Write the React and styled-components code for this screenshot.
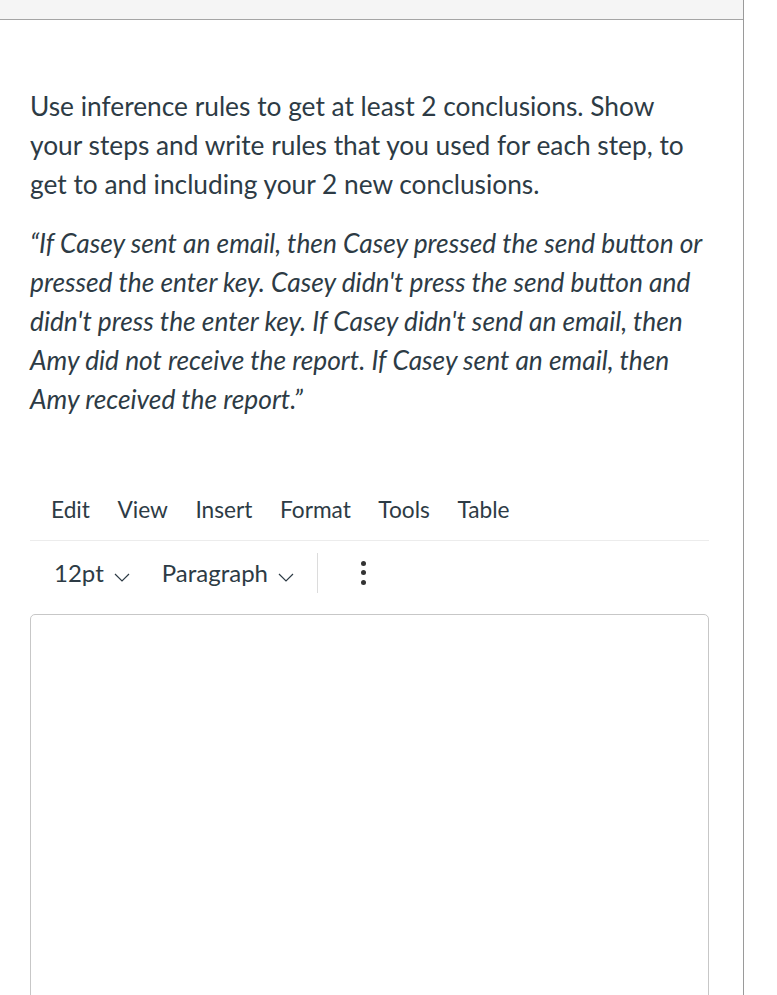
import React from 'react'
import styled, { createGlobalStyle } from 'styled-components'

const GlobalStyle = createGlobalStyle`
  html, body {
    margin: 0;
    padding: 0;
    background: #fff;
  }
  body {
    font-family: Lato, "Liberation Sans", sans-serif;
    color: #2d3b45;
  }
`

const Page = styled.div`
  width: 743px;
  height: 995px;
  border-right: 1px solid #9a9a9a;
  overflow: hidden;
`

const TopStrip = styled.div`
  height: 19px;
  background: #f5f5f5;
  border-bottom: 1px solid #a5a5a5;
`

const Content = styled.div`
  width: 679px;
  padding: 67px 0 0 30px;
`

const Para = styled.p`
  margin: 0 0 20px;
  font-size: 26.3px;
  line-height: 39px;
  font-style: ${p => (p.$italic ? 'italic' : 'normal')};
`

const Editor = styled.div`
  margin-top: 59px;
`

const MenuBar = styled.div`
  display: flex;
  gap: 27.5px;
  padding-left: 21px;
  height: 62px;
  align-items: center;
  border-bottom: 1px solid #ececec;
  font-size: 22.7px;
`

const MenuItem = styled.span``

const ToolBar = styled.div`
  display: flex;
  align-items: center;
  height: 63px;
  padding-left: 24px;
  font-size: 24px;
`

const Dropdown = styled.div`
  display: flex;
  align-items: center;
  gap: 10px;
  margin-right: ${p => p.$space}px;
  svg {
    margin-top: 9px;
  }
`

const Chevron = () => (
  <svg width="16" height="9" viewBox="0 0 16 9" fill="none">
    <path d="M1 1 L8 8 L15 1" stroke="#2d3b45" strokeWidth="1.2" />
  </svg>
)

const Divider = styled.div`
  width: 1px;
  height: 40px;
  background: #dcdcdc;
  margin-right: 43px;
`

const Kebab = styled.div`
  display: flex;
  flex-direction: column;
  gap: 4.5px;
  span {
    width: 5px;
    height: 5px;
    border-radius: 50%;
    background: #333;
  }
`

const EditArea = styled.div`
  margin-top: 10px;
  height: 420px;
  border: 1px solid #c7c7c7;
  border-radius: 5px;
`

export default function App() {
  return (
    <>
      <GlobalStyle />
      <Page>
        <TopStrip />
        <Content>
          <Para>
            Use inference rules to get at least 2 conclusions. Show your steps and write rules that you
            used for each step, to get to and including your 2 new conclusions.
          </Para>
          <Para $italic>
            “If Casey sent an email, then Casey pressed the send button or pressed the enter key. Casey
            didn't press the send button and didn't press the enter key. If Casey didn't send an email,
            then Amy did not receive the report. If Casey sent an email, then Amy received the report.”
          </Para>
          <Editor>
            <MenuBar>
              {['Edit', 'View', 'Insert', 'Format', 'Tools', 'Table'].map(m => (
                <MenuItem key={m}>{m}</MenuItem>
              ))}
            </MenuBar>
            <ToolBar>
              <Dropdown $space={32}>
                12pt <Chevron />
              </Dropdown>
              <Dropdown $space={23}>
                Paragraph <Chevron />
              </Dropdown>
              <Divider />
              <Kebab>
                <span />
                <span />
                <span />
              </Kebab>
            </ToolBar>
            <EditArea />
          </Editor>
        </Content>
      </Page>
    </>
  )
}
